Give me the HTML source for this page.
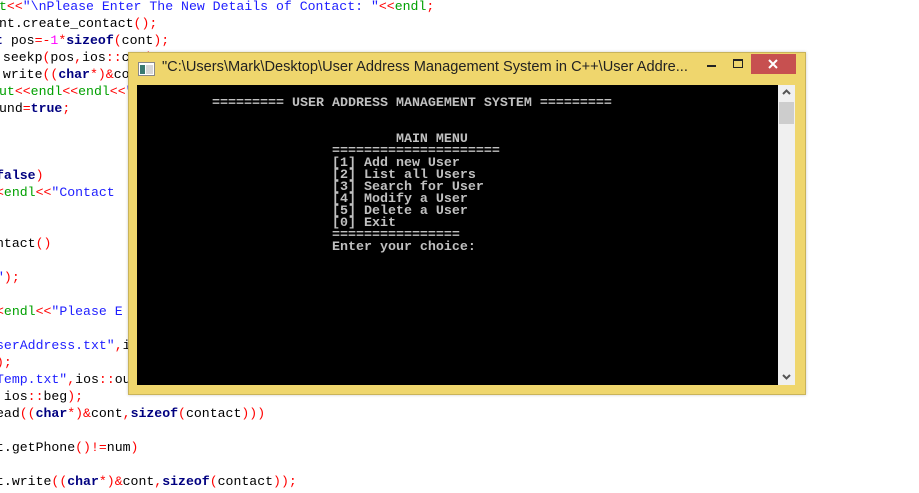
<!DOCTYPE html>
<html><head><meta charset="utf-8"><style>
body{margin:0;width:919px;height:493px;background:#fff;position:relative;overflow:hidden;}
.code{position:absolute;left:0;top:0px;font-family:"Liberation Mono",monospace;font-size:13.2px;white-space:pre;}
.l{position:absolute;height:17px;line-height:17px;}
.r{color:#ff0000}.b{color:#1e1eff}.g{color:#00a000}.k{color:#000080;font-weight:bold}.m{color:#ff00ff}.t{color:#000}
.win{position:absolute;left:128px;top:52px;width:676px;height:341px;background:#efd66d;border:1px solid #c9b35a;box-shadow:0 0 3px rgba(0,0,0,.2);}
.title{position:absolute;left:33px;top:6px;font-family:"Liberation Sans",sans-serif;font-size:14.6px;color:#222;white-space:pre;}
.con{position:absolute;left:8px;top:32px;width:641px;height:300px;background:#000;}
.ct{position:absolute;left:3px;top:1px;font-family:"Liberation Mono",monospace;font-size:13.33px;font-weight:bold;line-height:12px;color:#c0c0c0;white-space:pre;}
.sb{position:absolute;left:649px;top:32px;width:17px;height:300px;background:#f0f0f0;}
</style></head><body>
<div class="code">
<div class="l" style="top:-2px;left:-1px"><span class="g">t</span><span class="r">&lt;&lt;</span><span class="b">"\nPlease Enter The New Details of Contact: "</span><span class="r">&lt;&lt;</span><span class="g">endl</span><span class="r">;</span></div>
<div class="l" style="top:15px;left:-1px"><span class="t">nt.create_contact</span><span class="r">();</span></div>
<div class="l" style="top:32px;left:-5px"><span class="k">t</span><span class="t"> pos</span><span class="r">=-</span><span class="m">1</span><span class="r">*</span><span class="k">sizeof</span><span class="r">(</span>cont<span class="r">);</span></div>
<div class="l" style="top:49px;left:-5px"><span class="t">.seekp</span><span class="r">(</span>pos<span class="r">,</span>ios<span class="r">::</span>cur<span class="r">);</span></div>
<div class="l" style="top:66px;left:-5px"><span class="t">.write</span><span class="r">((</span><span class="k">char</span><span class="r">*)&amp;</span>cont</div>
<div class="l" style="top:83px;left:-1px"><span class="g">ut</span><span class="r">&lt;&lt;</span><span class="g">endl</span><span class="r">&lt;&lt;</span><span class="g">endl</span><span class="r">&lt;&lt;</span><span class="b">"</span></div>
<div class="l" style="top:100px;left:-1px"><span class="t">und</span><span class="r">=</span><span class="k">true</span><span class="r">;</span></div>
<div class="l" style="top:167px;left:-4px"><span class="k">false</span><span class="r">)</span></div>
<div class="l" style="top:184px;left:-4px"><span class="r">&lt;</span><span class="g">endl</span><span class="r">&lt;&lt;</span><span class="b">"Contact </span></div>
<div class="l" style="top:235px;left:-4px"><span class="t">ntact</span><span class="r">()</span></div>
<div class="l" style="top:269px;left:-4px"><span class="b">"</span><span class="r">);</span></div>
<div class="l" style="top:303px;left:-4px"><span class="r">&lt;</span><span class="g">endl</span><span class="r">&lt;&lt;</span><span class="b">"Please E</span></div>
<div class="l" style="top:337px;left:-4px"><span class="b">serAddress.txt"</span><span class="r">,</span>i</div>
<div class="l" style="top:354px;left:-4px"><span class="r">);</span></div>
<div class="l" style="top:371px;left:-4px"><span class="b">Temp.txt"</span><span class="r">,</span>ios<span class="r">::</span>out</div>
<div class="l" style="top:388px;left:-4px"> ios<span class="r">::</span>beg<span class="r">);</span></div>
<div class="l" style="top:405px;left:-4px"><span class="t">ead</span><span class="r">((</span><span class="k">char</span><span class="r">*)&amp;</span>cont<span class="r">,</span><span class="k">sizeof</span><span class="r">(</span>contact<span class="r">)))</span></div>
<div class="l" style="top:439px;left:-4px"><span class="t">t.getPhone</span><span class="r">()!=</span>num<span class="r">)</span></div>
<div class="l" style="top:473px;left:-4px"><span class="t">t.write</span><span class="r">((</span><span class="k">char</span><span class="r">*)&amp;</span>cont<span class="r">,</span><span class="k">sizeof</span><span class="r">(</span>contact<span class="r">));</span></div>
</div>
<div class="win">
<svg style="position:absolute;left:9px;top:8px" width="18" height="16"><rect x="0.5" y="1.5" width="16" height="13" fill="#fff" stroke="#8a8a8a"/><rect x="2" y="4" width="5" height="9" fill="#3a7a70"/><rect x="8" y="4" width="7" height="9" fill="#d8d8d8"/></svg>
<div class="title">"C:\Users\Mark\Desktop\User Address Management System in C++\User Addre...</div>
<div style="position:absolute;left:578px;top:12px;width:9px;height:2px;background:#222"></div>
<div style="position:absolute;left:604px;top:6px;width:8px;height:6px;border:1px solid #222;border-top-width:2px"></div>
<div style="position:absolute;left:622px;top:1px;width:45px;height:20px;background:#c75050"></div>
<svg style="position:absolute;left:638px;top:5px" width="12" height="12"><path d="M2 2L10 10M10 2L2 10" stroke="#fff" stroke-width="2"/></svg>
<div class="con"><div class="ct">
         ========= USER ADDRESS MANAGEMENT SYSTEM =========


                                MAIN MENU
                        =====================
                        [1] Add new User
                        [2] List all Users
                        [3] Search for User
                        [4] Modify a User
                        [5] Delete a User
                        [0] Exit
                        ================
                        Enter your choice:</div></div>
<div class="sb">
<svg style="position:absolute;left:4px;top:4px" width="9" height="7"><path d="M1 5L4.5 1.5L8 5" stroke="#555" stroke-width="2" fill="none"/></svg>
<div style="position:absolute;left:1px;top:17px;width:15px;height:22px;background:#cdcdcd"></div>
<svg style="position:absolute;left:4px;top:288px" width="9" height="7"><path d="M1 2L4.5 5.5L8 2" stroke="#555" stroke-width="2" fill="none"/></svg>
</div>
</div>
</body></html>
